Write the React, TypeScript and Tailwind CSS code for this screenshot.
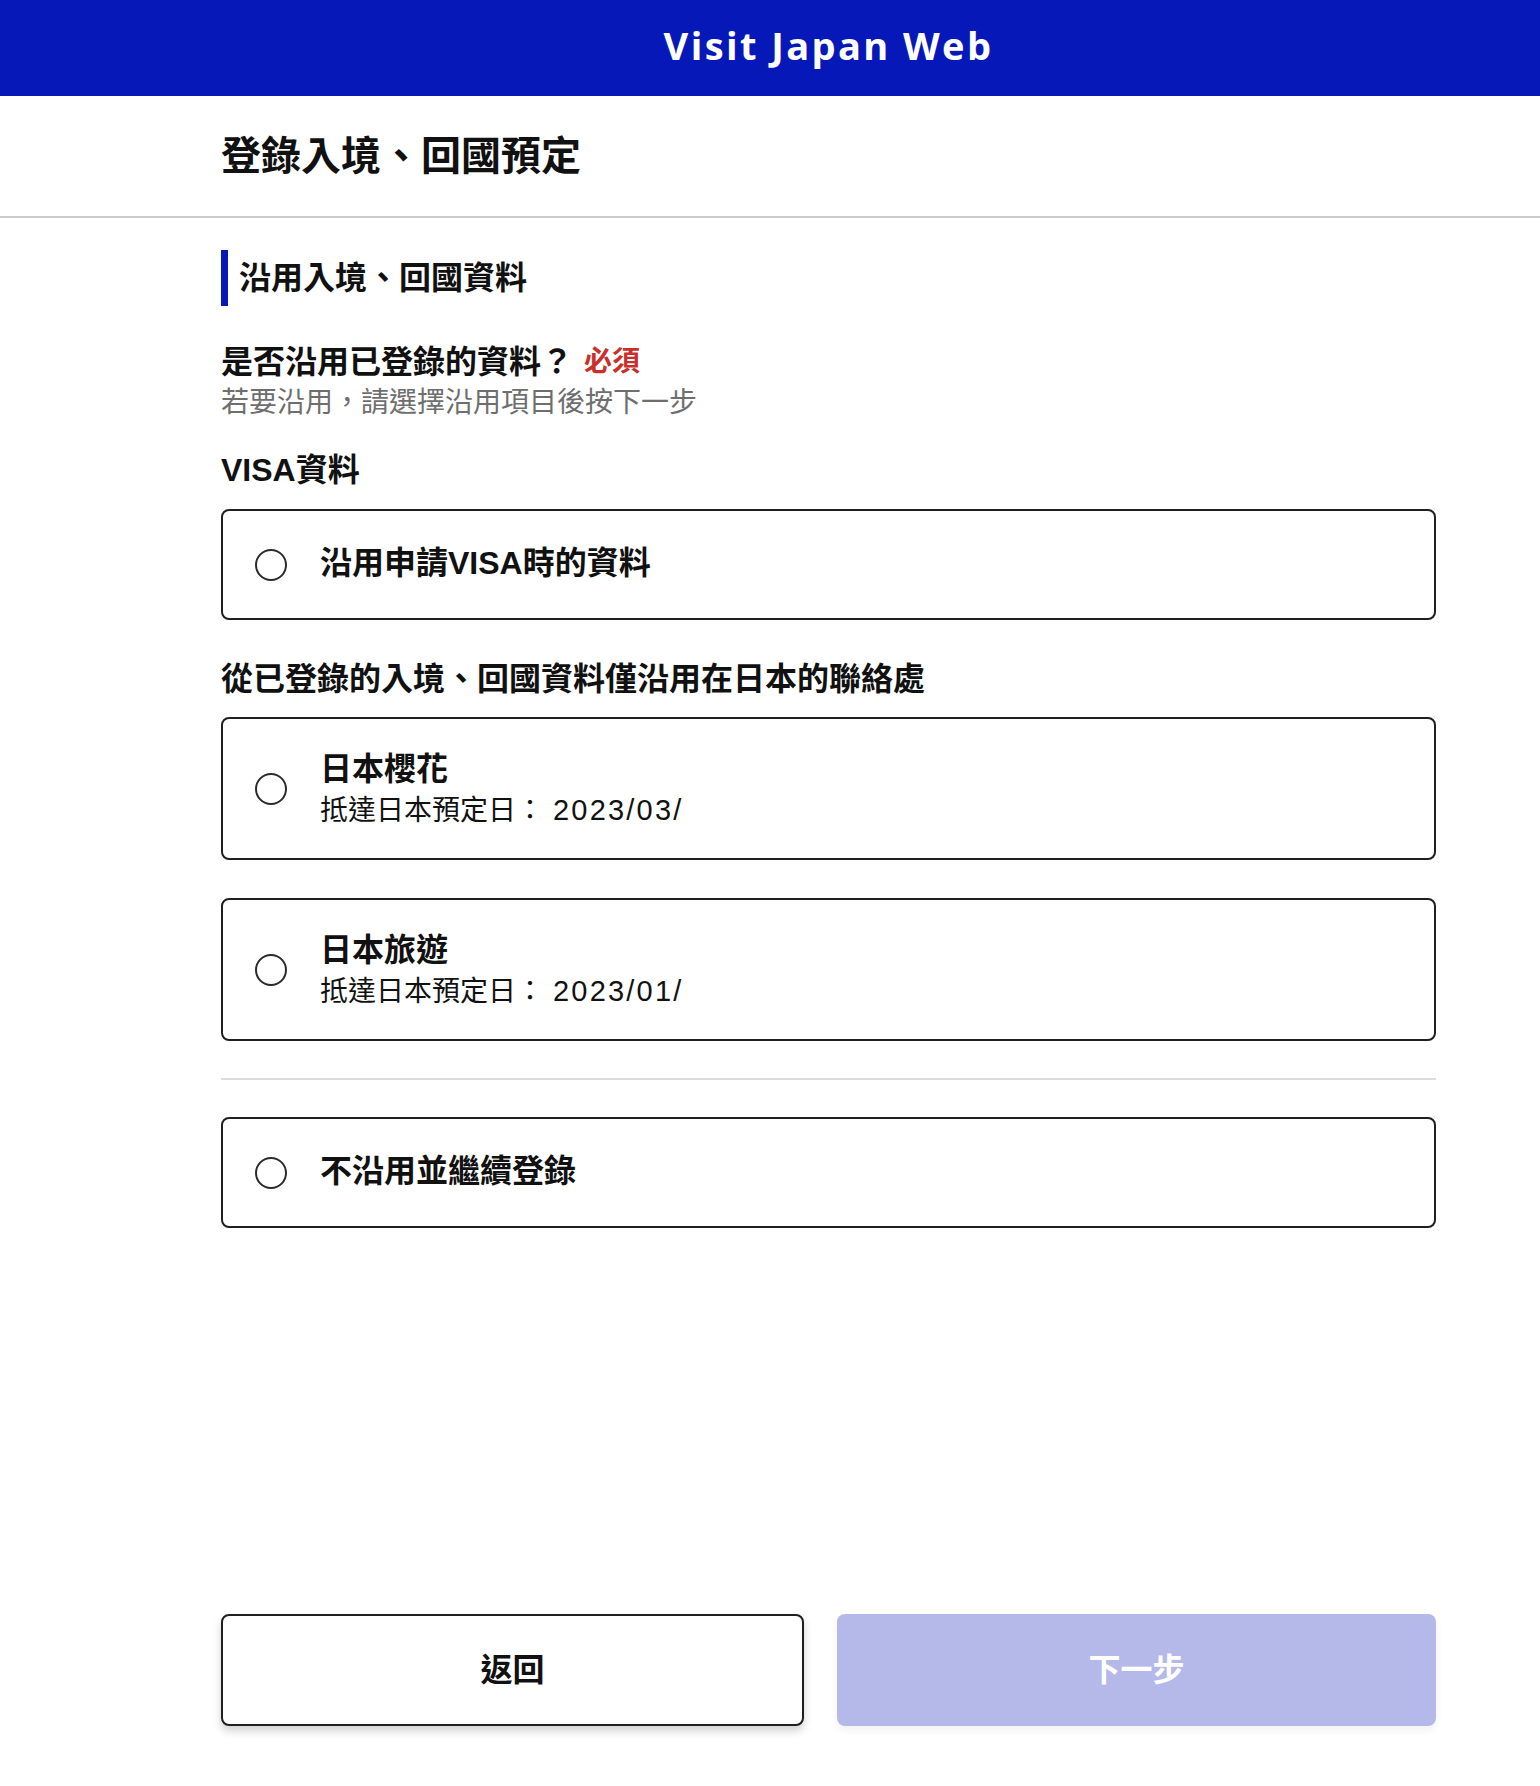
import React from "react";

const CJK = "font-['Liberation_Sans','Noto_Sans_CJK_TC',sans-serif]";

function Radio() {
  return <span className="block w-[32px] h-[32px] rounded-full border-2 border-[#2a2a2a] bg-white shrink-0" />;
}

function SingleOption({ label }: { label: string }) {
  return (
    <div className="h-[111px] border-2 border-[#1f1f1f] rounded-[8px] flex items-center pl-[32px]">
      <Radio />
      <span className="ml-[33px] text-[32px] font-bold leading-[40px] text-[#111] -mt-[3px]">{label}</span>
    </div>
  );
}

function TripOption({ name, date }: { name: string; date: string }) {
  return (
    <div className="h-[143px] border-2 border-[#1f1f1f] rounded-[8px] flex items-center pl-[32px]">
      <Radio />
      <div className="ml-[33px] flex flex-col pt-[4px]">
        <span className="text-[32px] font-bold leading-[40px] text-[#111]">{name}</span>
        <span className="text-[28px] leading-[42px] text-[#111]">
          抵達日本預定日：<span className="ml-[9px] text-[29px] tracking-[2.2px]">{date}</span>
        </span>
      </div>
    </div>
  );
}

export default function App() {
  return (
    <div className={`${CJK} bg-white min-h-[1786px] text-[#111]`}>
      <header className="h-[96px] bg-[#0619b8] flex items-center justify-center pl-[221px] pr-[104px]">
        <h1 className="font-['Open_Sans',sans-serif] font-bold text-[38px] tracking-[2.4px] text-white -mt-[6px]">
          Visit Japan Web
        </h1>
      </header>

      <div className="h-[122px] border-b-2 border-[#cccccc] flex items-center pl-[221px]">
        <h2 className="text-[40px] font-bold leading-[48px]">登錄入境、回國預定</h2>
      </div>

      <main className="pl-[221px] pr-[104px] pt-[32px] pb-[60px]">
        <div className="h-[56px] border-l-[7px] border-[#0619b8] flex items-center pl-[11px]">
          <h3 className="text-[32px] font-bold leading-[40px]">沿用入境、回國資料</h3>
        </div>

        <div className="mt-[36px] flex items-center">
          <span className="text-[32px] font-bold leading-[40px]">是否沿用已登錄的資料？</span>
          <span className="ml-[11px] text-[28px] font-bold leading-[40px] text-[#c9302c]">必須</span>
        </div>
        <p className="text-[28px] leading-[40px] text-[#6e6e6e] mt-[1px]">若要沿用，請選擇沿用項目後按下一步</p>

        <p className="mt-[27px] text-[32px] font-bold leading-[40px]">VISA資料</p>
        <div className="mt-[19px]">
          <SingleOption label="沿用申請VISA時的資料" />
        </div>

        <p className="mt-[39px] text-[32px] font-bold leading-[40px]">從已登錄的入境、回國資料僅沿用在日本的聯絡處</p>
        <div className="mt-[18px] flex flex-col gap-[38px]">
          <TripOption name="日本櫻花" date="2023/03/" />
          <TripOption name="日本旅遊" date="2023/01/" />
        </div>

        <div className="mt-[37px] h-[2px] bg-[#dddddd]" />

        <div className="mt-[37px]">
          <SingleOption label="不沿用並繼續登錄" />
        </div>

        <div className="mt-[386px] flex gap-[33px]">
          <button className="w-[583px] h-[112px] border-2 border-[#1f1f1f] rounded-[8px] bg-white shadow-[0_5px_8px_rgba(0,0,0,0.18)] text-[32px] font-bold text-[#111]">
            返回
          </button>
          <button className="flex-1 h-[112px] rounded-[8px] bg-[#b5b9e9] shadow-[0_4px_8px_rgba(0,0,0,0.06)] text-[32px] font-bold text-white">
            下一步
          </button>
        </div>
      </main>
    </div>
  );
}
